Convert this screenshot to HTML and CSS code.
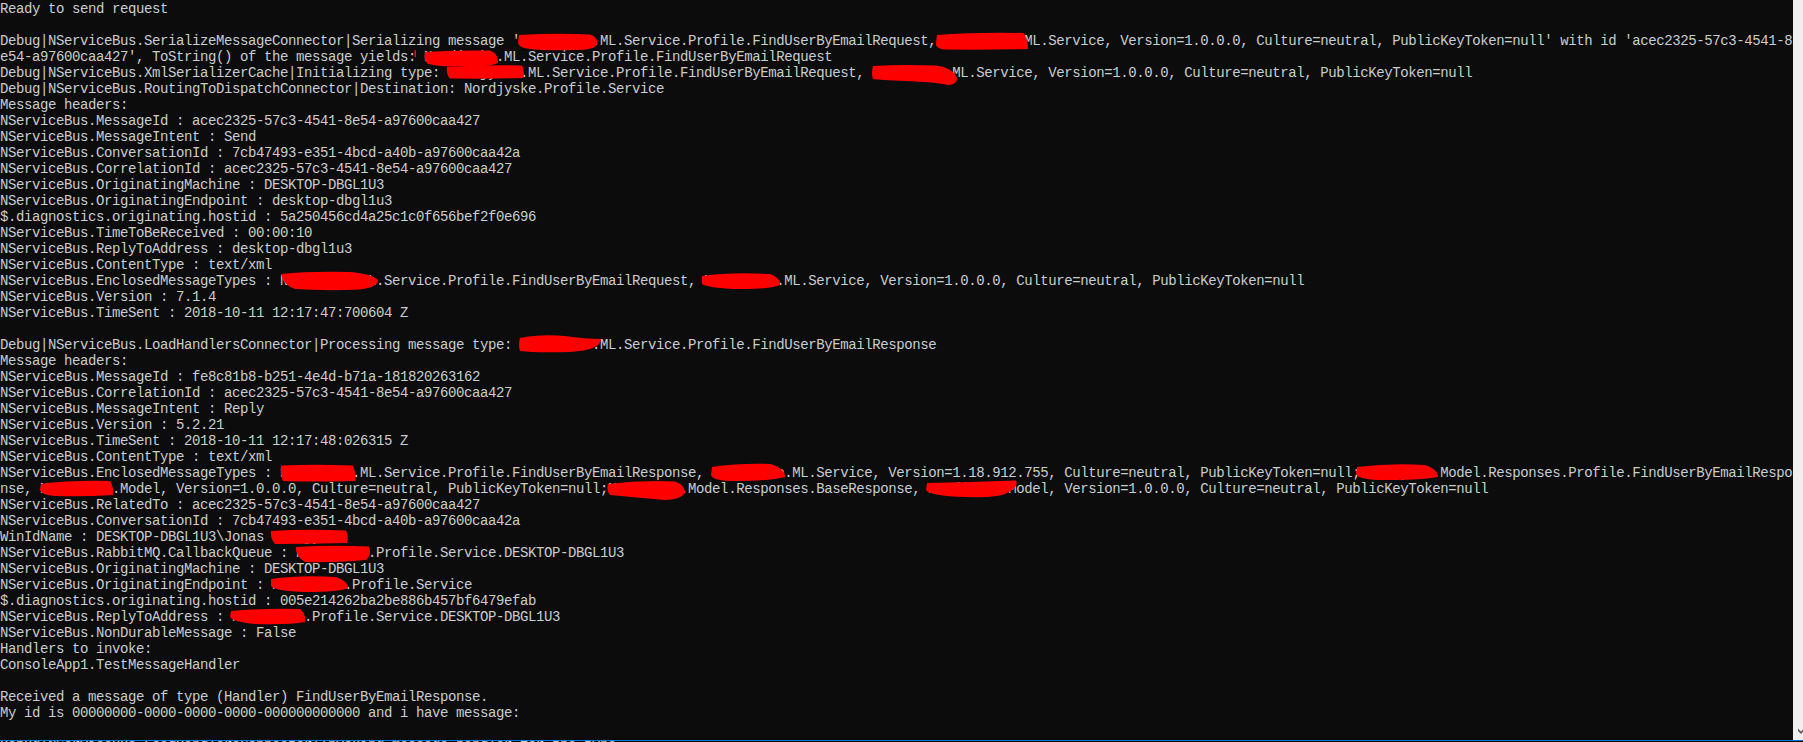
FILE: index.html
```html
<!DOCTYPE html>
<html lang="en">
<head>
<meta charset="utf-8">
<title>Console</title>
<link rel="stylesheet" href="styles.css">
</head>
<body>
<div class="window">
  <div class="client">
    <main class="console">
<pre class="output">Ready to send request

Debug|NServiceBus.SerializeMessageConnector|Serializing message 'Nordjyske.ML.Service.Profile.FindUserByEmailRequest, Nordjyske.ML.Service, Version=1.0.0.0, Culture=neutral, PublicKeyToken=null' with id 'acec2325-57c3-4541-8
e54-a97600caa427', ToString() of the message yields: Nordjyske.ML.Service.Profile.FindUserByEmailRequest
Debug|NServiceBus.XmlSerializerCache|Initializing type: Nordjyske.ML.Service.Profile.FindUserByEmailRequest, Nordjyske.ML.Service, Version=1.0.0.0, Culture=neutral, PublicKeyToken=null
Debug|NServiceBus.RoutingToDispatchConnector|Destination: Nordjyske.Profile.Service
Message headers:
NServiceBus.MessageId : acec2325-57c3-4541-8e54-a97600caa427
NServiceBus.MessageIntent : Send
NServiceBus.ConversationId : 7cb47493-e351-4bcd-a40b-a97600caa42a
NServiceBus.CorrelationId : acec2325-57c3-4541-8e54-a97600caa427
NServiceBus.OriginatingMachine : DESKTOP-DBGL1U3
NServiceBus.OriginatingEndpoint : desktop-dbgl1u3
$.diagnostics.originating.hostid : 5a250456cd4a25c1c0f656bef2f0e696
NServiceBus.TimeToBeReceived : 00:00:10
NServiceBus.ReplyToAddress : desktop-dbgl1u3
NServiceBus.ContentType : text/xml
NServiceBus.EnclosedMessageTypes : Nordjyske.ML.Service.Profile.FindUserByEmailRequest, Nordjyske.ML.Service, Version=1.0.0.0, Culture=neutral, PublicKeyToken=null
NServiceBus.Version : 7.1.4
NServiceBus.TimeSent : 2018-10-11 12:17:47:700604 Z

Debug|NServiceBus.LoadHandlersConnector|Processing message type: Nordjyske.ML.Service.Profile.FindUserByEmailResponse
Message headers:
NServiceBus.MessageId : fe8c81b8-b251-4e4d-b71a-181820263162
NServiceBus.CorrelationId : acec2325-57c3-4541-8e54-a97600caa427
NServiceBus.MessageIntent : Reply
NServiceBus.Version : 5.2.21
NServiceBus.TimeSent : 2018-10-11 12:17:48:026315 Z
NServiceBus.ContentType : text/xml
NServiceBus.EnclosedMessageTypes : Nordjyske.ML.Service.Profile.FindUserByEmailResponse, Nordjyske.ML.Service, Version=1.18.912.755, Culture=neutral, PublicKeyToken=null;Nordjyske.Model.Responses.Profile.FindUserByEmailRespo
nse, Nordjyske.Model, Version=1.0.0.0, Culture=neutral, PublicKeyToken=null;Nordjyske.Model.Responses.BaseResponse, Nordjyske.Model, Version=1.0.0.0, Culture=neutral, PublicKeyToken=null
NServiceBus.RelatedTo : acec2325-57c3-4541-8e54-a97600caa427
NServiceBus.ConversationId : 7cb47493-e351-4bcd-a40b-a97600caa42a
WinIdName : DESKTOP-DBGL1U3\Jonas Nordjyske
NServiceBus.RabbitMQ.CallbackQueue : Nordjyske.Profile.Service.DESKTOP-DBGL1U3
NServiceBus.OriginatingMachine : DESKTOP-DBGL1U3
NServiceBus.OriginatingEndpoint : Nordjyske.Profile.Service
$.diagnostics.originating.hostid : 005e214262ba2be886b457bf6479efab
NServiceBus.ReplyToAddress : Nordjyske.Profile.Service.DESKTOP-DBGL1U3
NServiceBus.NonDurableMessage : False
Handlers to invoke:
ConsoleApp1.TestMessageHandler

Received a message of type (Handler) FindUserByEmailResponse.
My id is 00000000-0000-0000-0000-000000000000 and i have message:</pre>
      <svg class="scribbles" viewBox="0 0 1793 740" aria-hidden="true">
        <path d="M519 35Q555 33 590 34.500Q598 37 597 44Q595 50 575 50Q545 51 530 49Q519 48 518 43Z"/>
        <path d="M937 35Q975 32 1024 33Q1028 42 1028 49Q985 50 945 49.500Q935 49 936 43Z"/>
        <path d="M414.500 50L416 50L416 57L414.500 57Z"/>
        <path d="M425 52Q450 50 490 50.500Q498 53 498 63Q490 67 465 66.500Q440 67 428 64Q423 60 425 52Z"/>
        <path d="M447 67Q485 64.500 522 65.500Q525 72 523 78Q490 79 450 78.500Q446 74 447 67Z"/>
        <path d="M873 66Q900 64.500 935 65.500Q952 67 957 78Q957 85 948 85Q935 82 905 81Q880 80 873 79Q871 73 873 66Z"/>
        <path d="M281 274Q310 271 350 272Q372 274 378 280Q378 287 360 289.500Q325 291 295 289Q283 285 281 274Z"/>
        <path d="M702 276Q730 272 770 274Q781 278 780 285Q770 289.500 735 289Q708 288 702 284Z"/>
        <path d="M520 338Q540 334 565 336Q585 339 601 339Q601 350 570 352Q535 353 520 351Q518 345 520 338Z"/>
        <path d="M281 465.500Q315 464 353 465.500Q356 473 355 481Q315 482 283 481Q280 474 281 465.500Z"/>
        <path d="M712 467Q740 463 770 464Q785 468 785 477Q770 481 735 481Q713 481 711 475Z"/>
        <path d="M1357 467Q1390 463 1425 465Q1438 469 1438 477Q1420 480.500 1385 480Q1359 480 1356 474Z"/>
        <path d="M41 484Q70 480 110 481Q114 487 113 495Q85 497 55 496Q41 495 40 490Z"/>
        <path d="M608 484Q640 480 675 481.500Q685 485 685 493Q680 500 665 500Q630 497 610 495Q606 490 608 484Z"/>
        <path d="M927 483Q970 482 1016 480.500Q1019 487 1007 493Q1000 498 965 497Q930 496 926 490Z"/>
        <path d="M271 531Q305 529 346 530.500Q349 538 347 543Q310 544 275 544Q270 538 271 531Z"/>
        <path d="M296 547Q330 545 369 546.500Q372 555 366 560Q330 563 305 562Q295 556 296 547Z"/>
        <path d="M271 579Q300 575 336 577Q348 581 348 588Q340 592 305 592Q275 591 271 586Z"/>
        <path d="M231 611Q265 608 300 609Q306 614 305 622Q290 625 255 624Q233 622 230 617Z"/>
      </svg>
    </main>
    <aside class="scrollbar">
      <svg class="chevron" viewBox="0 0 6 6" aria-hidden="true"><path d="M0 0.500L3 3.500L6 0.500V3L3 6L0 3Z"/></svg>
    </aside>
  </div>
  <div class="accent"></div>
  <div class="clipped-row"><pre class="clipped-line">Debug|NServiceBus.LoadHandlersConnector|Invoking message handler for the type</pre></div>
</div>
</body>
</html>
```

FILE: styles.css
```css
html, body {
  margin: 0;
  padding: 0;
  height: 100%;
  background: #0c0c0c;
  overflow: hidden;
}

.window {
  display: flex;
  flex-direction: column;
  width: 1803px;
  height: 742px;
}

.client {
  display: flex;
  height: 740px;
}

.console {
  position: relative;
  flex: 1;
  min-width: 0;
  background: #0c0c0c;
  overflow: hidden;
  padding-top: 1px;
  box-sizing: border-box;
}

.output,
.clipped-line {
  margin: 0;
  font-family: "Liberation Mono", monospace;
  font-size: 14px;
  letter-spacing: -0.4px;
  line-height: 16px;
  color: #cccccc;
  white-space: pre;
}

.scribbles {
  position: absolute;
  top: 0;
  left: 0;
  width: 1793px;
  height: 740px;
}

.scribbles path {
  fill: #ff0000;
}

.scrollbar {
  display: flex;
  flex-direction: column;
  justify-content: flex-end;
  align-items: flex-end;
  width: 10px;
  background: #f0f0f0;
  padding-bottom: 6px;
  box-sizing: border-box;
  overflow: hidden;
}

.chevron {
  display: block;
  width: 6px;
  height: 6px;
  margin-right: -1px;
}

.chevron path {
  fill: #606060;
}

.accent {
  height: 1px;
  background: #0078d7;
}

.clipped-row {
  height: 1px;
  overflow: hidden;
}

.clipped-line {
  margin-top: -4px;
}
```
